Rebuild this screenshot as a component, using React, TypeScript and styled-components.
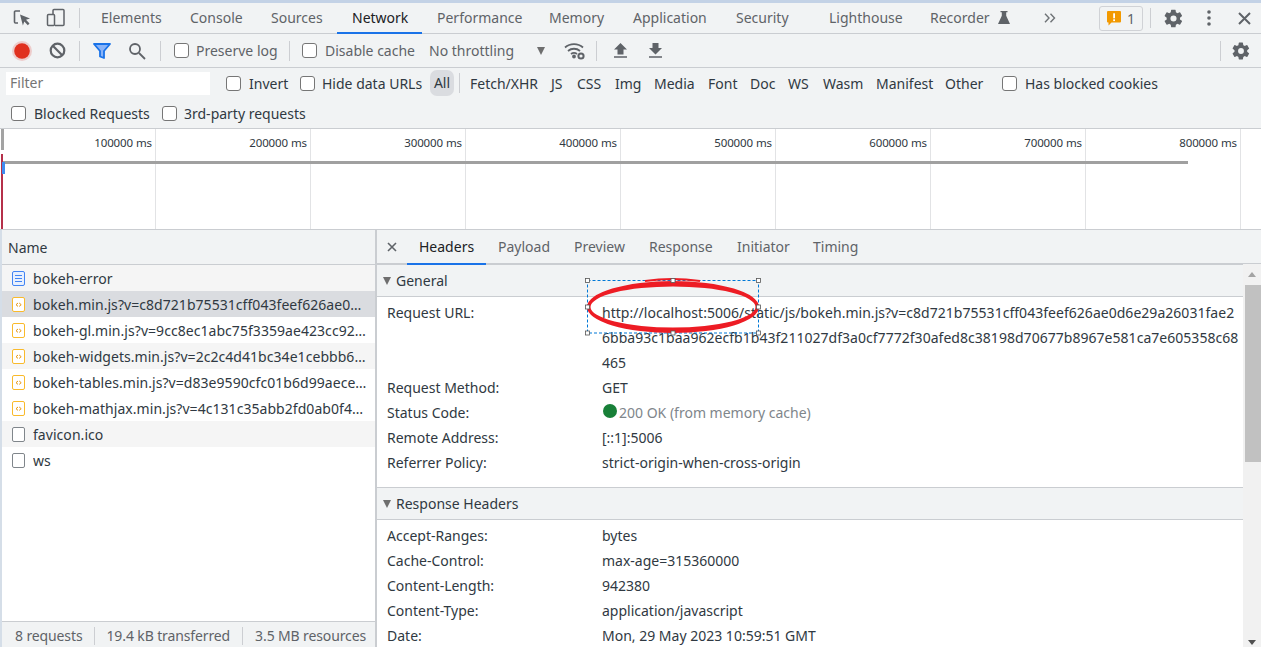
// App.tsx
import React from "react";
import styled, { createGlobalStyle } from "styled-components";

const GlobalStyle = createGlobalStyle`
  html, body { margin: 0; padding: 0; height: 100%; overflow: hidden; background: #fff; }
  body { font-family: "Noto Sans", "Open Sans", sans-serif; font-size: 14px; color: #303942; }
  #root { height: 647px; }
`;

const Page = styled.div`
  position: relative;
  width: 1261px;
  height: 647px;
  display: flex;
  flex-direction: column;
  overflow: hidden;
  border-top: 3px solid #c3d2e6;
  box-sizing: border-box;
`;

const TabBar = styled.div`
  flex: none;
  display: flex;
  align-items: stretch;
  background: #f1f3f4;
  border-bottom: 1px solid #cacdd1;
  height: 30px;
`;

const IconSlot = styled.div<{ $w: number; $pl?: number }>`
  width: ${(p) => p.$w}px;
  flex: none;
  display: flex;
  align-items: center;
  justify-content: center;
  box-sizing: border-box;
  padding-left: ${(p) => p.$pl ?? 0}px;
`;

const VLine = styled.div<{ $ml?: number; $mr?: number; $h?: number }>`
  flex: none;
  align-self: center;
  width: 1px;
  height: ${(p) => p.$h ?? 20}px;
  background: #ccced2;
  margin: 0 ${(p) => p.$mr ?? 0}px 0 ${(p) => p.$ml ?? 0}px;
`;

const MainTab = styled.div<{ $w: number; $on?: boolean }>`
  width: ${(p) => p.$w}px;
  flex: none;
  display: flex;
  align-items: center;
  justify-content: flex-start;
  padding-left: 15px;
  box-sizing: border-box;
  white-space: nowrap;
  color: ${(p) => (p.$on ? "#202124" : "#5f6368")};
  margin-bottom: -1px;
  border-bottom: 2px solid ${(p) => (p.$on ? "#1a73e8" : "transparent")};
  gap: 8px;
`;

const IssueBadge = styled.div`
  flex: none;
  align-self: center;
  width: 44px;
  height: 25px;
  box-sizing: border-box;
  margin-left: 38px;
  border: 1px solid #d0d2d6;
  border-radius: 3px;
  display: flex;
  align-items: center;
  justify-content: center;
  gap: 6px;
  color: #5f6368;
`;

const Toolbar = styled.div`
  height: 33px;
  flex: none;
  display: flex;
  align-items: center;
  background: #f1f3f4;
  border-bottom: 1px solid #cacdd1;
  color: #5f6368;
`;

const Check = styled.span`
  flex: none;
  width: 13px;
  height: 13px;
  border: 1px solid #767676;
  border-radius: 3px;
  background: #fff;
  display: inline-block;
`;

const CheckLabel = styled.label<{ $w?: number; $gap?: number }>`
  flex: none;
  display: inline-flex;
  align-items: center;
  gap: ${(p) => p.$gap ?? 8}px;
  white-space: nowrap;
  ${(p) => (p.$w ? `width: ${p.$w}px;` : "")}
`;

const FilterPanel = styled.div`
  height: 60px;
  flex: none;
  background: #f1f3f4;
  border-bottom: 1px solid #cacdd1;
  color: #303942;
`;

const FilterRow = styled.div<{ $pl?: number }>`
  height: 30px;
  display: flex;
  align-items: center;
  padding-left: ${(p) => p.$pl ?? 0}px;
`;

const FilterBox = styled.div`
  width: 204px;
  height: 23px;
  flex: none;
  margin: 0 16px 0 6px;
  padding-left: 4px;
  box-sizing: border-box;
  background: #fff;
  color: #757575;
  line-height: 22px;
`;

const TypeChip = styled.div<{ $w: number; $on?: boolean }>`
  flex: none;
  width: ${(p) => p.$w}px;
  white-space: nowrap;
  ${(p) =>
    p.$on
      ? `background:#dadce0;border-radius:7px;height:26px;line-height:26px;text-align:center;`
      : ""}
`;

const Timeline = styled.div`
  position: relative;
  height: 100px;
  flex: none;
  display: flex;
  background: #fff;
  padding-left: 1px;
`;

const TimeCell = styled.div`
  flex: none;
  width: 155px;
  box-sizing: border-box;
  height: 100px;
  border-right: 1px solid #e2e3e5;
  text-align: right;
  padding: 4px 3px 0 0;
  font-size: 11.5px;
  letter-spacing: -0.1px;
  line-height: 20px;
  color: #303942;
  white-space: nowrap;
`;

const OverviewBar = styled.div`
  position: absolute;
  left: 2px;
  top: 32px;
  width: 1186px;
  height: 3px;
  background: #a0a0a0;
`;

const LeftGrip = styled.div`
  position: absolute;
  left: 1px;
  top: 0;
  width: 3px;
  height: 21px;
  background: #a3a3a3;
`;

const RedLine = styled.div`
  position: absolute;
  left: 1px;
  top: 25px;
  width: 2px;
  height: 75px;
  background: #b5304a;
`;

const BlueTick = styled.div`
  position: absolute;
  left: 2px;
  top: 33px;
  width: 3px;
  height: 12px;
  background: #3f8cf0;
`;

const Split = styled.div`
  flex: 1;
  min-height: 0;
  display: flex;
  border-top: 1px solid #cacdd1;
`;

const ListPane = styled.div`
  flex: none;
  width: 377px;
  box-sizing: border-box;
  border-left: 2px solid #d5dee8;
  border-right: 2px solid #cacdd1;
  display: flex;
  flex-direction: column;
`;

const ListHead = styled.div`
  height: 34px;
  flex: none;
  box-sizing: content-box;
  background: #f1f3f4;
  border-bottom: 1px solid #cacdd1;
  padding-left: 6px;
  line-height: 36px;
  color: #303942;
`;

const Rows = styled.div`
  flex: 1;
  min-height: 0;
`;

const Row = styled.div<{ $bg: string }>`
  height: 26px;
  display: flex;
  align-items: center;
  gap: 8px;
  padding-left: 10px;
  padding-right: 7px;
  background: ${(p) => p.$bg};
  white-space: nowrap;
  color: #303942;
`;

const RowName = styled.span`
  overflow: hidden;
  text-overflow: ellipsis;
  min-width: 0;
  letter-spacing: 0.05px;
`;

const StatusBar = styled.div`
  height: 26px;
  flex: none;
  background: #f1f3f4;
  border-top: 1px solid #cacdd1;
  display: flex;
  align-items: center;
  color: #5f6368;
  white-space: nowrap;
  padding-left: 13px;
  padding-top: 2px;
  box-sizing: border-box;
`;

const StatusText = styled.span`
  letter-spacing: -0.12px;
`;

const DetailPane = styled.div`
  flex: 1;
  min-width: 0;
  display: flex;
  flex-direction: column;
`;

const DetailTabs = styled.div`
  height: 33px;
  flex: none;
  background: #f1f3f4;
  border-bottom: 2px solid #cacdd1;
  display: flex;
  align-items: stretch;
`;

const DetailTab = styled.div<{ $w: number; $on?: boolean }>`
  flex: none;
  width: ${(p) => p.$w}px;
  box-sizing: border-box;
  display: flex;
  align-items: center;
  padding-left: 12px;
  margin-bottom: -2px;
  border-bottom: 2px solid ${(p) => (p.$on ? "#1a73e8" : "transparent")};
  color: ${(p) => (p.$on ? "#202124" : "#5f6368")};
  white-space: nowrap;
`;

const DetailBody = styled.div`
  flex: 1;
  min-height: 0;
  display: flex;
`;

const Sections = styled.div`
  flex: 1;
  min-width: 0;
  overflow: hidden;
`;

const SectionHead = styled.div<{ $top?: boolean }>`
  height: 31px;
  background: #f1f3f4;
  border-bottom: 1px solid #cacdd1;
  ${(p) => (p.$top ? "border-top: 1px solid #cacdd1;" : "")}
  display: flex;
  align-items: center;
  gap: 5px;
  padding-left: 6px;
  color: #303942;
`;

const Caret = styled.span`
  width: 0;
  height: 0;
  flex: none;
  border-left: 4.5px solid transparent;
  border-right: 4.5px solid transparent;
  border-top: 8px solid #6e6e6e;
`;

const Pairs = styled.div`
  padding: 3px 3px 12px 10px;
`;

const Pair = styled.div`
  display: grid;
  grid-template-columns: 215px 1fr;
  line-height: 25px;
  color: #303942;
`;

const PairValue = styled.div`
  display: flex;
  align-items: center;
  gap: 2px;
`;

const UrlValue = styled.div`
  word-break: break-all;
  letter-spacing: 0.03px;
`;

const Dot = styled.span`
  width: 14px;
  height: 14px;
  border-radius: 50%;
  background: #188038;
  flex: none;
  margin-top: -3px;
  margin-left: 1px;
`;

const Muted = styled.span`
  color: #80868b;
`;

const Scrollbar = styled.div`
  flex: none;
  width: 18px;
  background: #f1f1f1;
  display: flex;
  flex-direction: column;
  align-items: center;
  margin-top: -1px;
`;

const ScrollBtn = styled.div<{ $up?: boolean }>`
  flex: none;
  height: ${(p) => (p.$up ? 21 : 10)}px;
  width: 100%;
  display: flex;
  align-items: center;
  justify-content: center;
  &::before {
    content: "";
    border-left: 4.5px solid transparent;
    border-right: 4.5px solid transparent;
    ${(p) =>
      p.$up ? "border-bottom: 5px solid #a3a3a3;" : "border-top: 5px solid #505050;"}
  }
`;

const Thumb = styled.div`
  flex: none;
  width: 16px;
  height: 177px;
  margin-left: 2px;
  background: #c1c1c1;
`;

const Spacer = styled.div`
  flex: 1;
`;

const Annotation = styled.svg`
  position: absolute;
  left: 580px;
  top: 269px;
  pointer-events: none;
`;

const tabs: [string, number, boolean?][] = [
  ["Elements", 89],
  ["Console", 81],
  ["Sources", 81],
  ["Network", 85, true],
  ["Performance", 112],
  ["Memory", 84],
  ["Application", 103],
  ["Security", 93],
  ["Lighthouse", 101],
];

const types: [string, number][] = [
  ["Fetch/XHR", 81],
  ["JS", 26],
  ["CSS", 38],
  ["Img", 39],
  ["Media", 54],
  ["Font", 42],
  ["Doc", 38],
  ["WS", 35],
  ["Wasm", 53],
  ["Manifest", 69],
  ["Other", 57],
];

const requests: [string, string, string][] = [
  ["doc", "bokeh-error", "#f5f5f5"],
  ["js", "bokeh.min.js?v=c8d721b75531cff043feef626ae0d6e29a26031fae2", "#dadce0"],
  ["js", "bokeh-gl.min.js?v=9cc8ec1abc75f3359ae423cc92f4a1c0", "#fff"],
  ["js", "bokeh-widgets.min.js?v=2c2c4d41bc34e1cebbb6a91c", "#f5f5f5"],
  ["js", "bokeh-tables.min.js?v=d83e9590cfc01b6d99aece44f1", "#fff"],
  ["js", "bokeh-mathjax.min.js?v=4c131c35abb2fd0ab0f4d2a1", "#fff"],
  ["file", "favicon.ico", "#f5f5f5"],
  ["file", "ws", "#fff"],
];

const responseHeaders: [string, string][] = [
  ["Accept-Ranges:", "bytes"],
  ["Cache-Control:", "max-age=315360000"],
  ["Content-Length:", "942380"],
  ["Content-Type:", "application/javascript"],
  ["Date:", "Mon, 29 May 2023 10:59:51 GMT"],
];

const handles = [
  [7.5, 8.5],
  [93, 8.5],
  [178.5, 8.5],
  [7.5, 35],
  [178.5, 35],
  [7.5, 61],
  [93, 61],
  [178.5, 61],
];

const Gear = ({ size = 18 }: { size?: number }) => (
  <svg width={size} height={size} viewBox="0 0 24 24" fill="#5f6368">
    <path d="M19.4 13c.04-.33.06-.66.06-1s-.02-.67-.06-1l2.15-1.68a.5.5 0 0 0 .12-.64l-2.04-3.53a.5.5 0 0 0-.62-.22l-2.54 1.02a7.5 7.5 0 0 0-1.73-1L14.36 2.3a.5.5 0 0 0-.5-.43H9.78a.5.5 0 0 0-.5.43L8.9 4.95a7.7 7.7 0 0 0-1.73 1L4.63 4.93a.5.5 0 0 0-.62.22L1.97 8.68a.5.5 0 0 0 .12.64L4.24 11c-.04.33-.07.67-.07 1s.03.67.07 1l-2.15 1.68a.5.5 0 0 0-.12.64l2.04 3.53c.13.22.39.3.62.22l2.54-1.02c.54.41 1.11.76 1.73 1l.38 2.65c.05.25.26.43.5.43h4.08c.24 0 .45-.18.5-.43l.38-2.65a7.7 7.7 0 0 0 1.73-1l2.54 1.02c.23.08.49 0 .62-.22l2.04-3.53a.5.5 0 0 0-.12-.64L19.4 13ZM12 15.5a3.5 3.5 0 1 1 0-7 3.5 3.5 0 0 1 0 7Z" />
  </svg>
);

const FileIcon = ({ kind }: { kind: string }) => {
  if (kind === "doc") {
    return (
      <svg width="13" height="15" viewBox="0 0 13 15" style={{ flex: "none" }}>
        <rect x="0.5" y="0.5" width="12" height="14" rx="1.5" fill="#e8f0fe" stroke="#4285f4" />
        <path d="M3 4.5h7M3 7.5h7M3 10.5h7" stroke="#4285f4" strokeWidth="1.2" />
      </svg>
    );
  }
  if (kind === "js") {
    return (
      <svg width="13" height="15" viewBox="0 0 13 15" style={{ flex: "none" }}>
        <rect x="0.5" y="0.5" width="12" height="14" rx="1.5" fill="#fff" stroke="#f9ba2c" />
        <path d="M6 6 4 7.7 6 9.4M7.2 6l2 1.7-2 1.7" fill="none" stroke="#e8960c" strokeWidth="1" />
      </svg>
    );
  }
  return (
    <svg width="13" height="15" viewBox="0 0 13 15" style={{ flex: "none" }}>
      <rect x="0.5" y="0.5" width="12" height="14" rx="1.5" fill="#fff" stroke="#80868b" />
    </svg>
  );
};

export default function App() {
  return (
    <>
      <GlobalStyle />
      <Page>
        <TabBar>
          <IconSlot $w={45}>
            <svg width="20" height="18" viewBox="0 0 20 18" fill="none">
              <path d="M7 2H2.500A1 1 0 0 0 1.500 3v10a1 1 0 0 0 1 1H5" stroke="#5f6368" strokeWidth="1.6" />
              <path d="M7 5.500 17 9.500l-4 1.300 3.500 3.700-1.700 1.700-3.500-3.700-1.400 4Z" fill="#5f6368" />
            </svg>
          </IconSlot>
          <IconSlot $w={22}>
            <svg width="20" height="20" viewBox="0 0 20 20" fill="none" stroke="#5f6368" strokeWidth="1.5">
              <path d="M7 6V2.500a1 1 0 0 1 1-1h9a1 1 0 0 1 1 1v14a1 1 0 0 1-1 1h-8" />
              <rect x="1.500" y="6.500" width="7" height="11" rx="1" />
            </svg>
          </IconSlot>
          <VLine $ml={12} $mr={6} />
          {tabs.map(([name, w, on]) => (
            <MainTab key={name} $w={w} $on={on}>
              {name}
            </MainTab>
          ))}
          <MainTab $w={124}>
            Recorder
            <svg width="12" height="13" viewBox="0 0 12 13" fill="#5f6368">
              <path d="M2.500 0h7v1.200H8.200v3.600L12 13H0l3.800-8.200V1.200H2.500Z" />
            </svg>
          </MainTab>
          <IconSlot $w={22}>
            <svg width="12" height="10" viewBox="0 0 12 10" fill="none" stroke="#6e7276" strokeWidth="1.4">
              <path d="M1 .8 5 5 1 9.200M6.500.8l4 4.200-4 4.200" />
            </svg>
          </IconSlot>
          <IssueBadge>
            <svg width="14" height="15" viewBox="0 0 14 15">
              <path d="M0 1a1 1 0 0 1 1-1h12a1 1 0 0 1 1 1v9.500a1 1 0 0 1-1 1H4.500L1.500 14.500V11.500H1a1 1 0 0 1-1-1Z" fill="#f29900" />
              <rect x="6.200" y="2.300" width="1.800" height="5" fill="#fff" />
              <rect x="6.200" y="8.300" width="1.800" height="1.800" fill="#fff" />
            </svg>
            1
          </IssueBadge>
          <VLine $ml={7} $mr={7} />
          <IconSlot $w={30}>
            <Gear size={21} />
          </IconSlot>
          <IconSlot $w={42}>
            <svg width="4" height="16" viewBox="0 0 4 16" fill="#5f6368">
              <circle cx="2" cy="2" r="1.800" />
              <circle cx="2" cy="8" r="1.800" />
              <circle cx="2" cy="14" r="1.800" />
            </svg>
          </IconSlot>
          <IconSlot $w={28}>
            <svg width="13" height="13" viewBox="0 0 13 13" stroke="#5f6368" strokeWidth="2">
              <path d="M1 1l11 11M12 1 1 12" />
            </svg>
          </IconSlot>
        </TabBar>

        <Toolbar>
          <IconSlot $w={43}>
            <svg width="22" height="22" viewBox="0 0 22 22">
              <circle cx="11" cy="11" r="10" fill="#e33226" opacity="0.2" />
              <circle cx="11" cy="11" r="7.800" fill="#e0301e" />
            </svg>
          </IconSlot>
          <IconSlot $w={29}>
            <svg width="17" height="17" viewBox="0 0 17 17" fill="none" stroke="#5f6368" strokeWidth="2.200">
              <circle cx="8.500" cy="8.500" r="6.800" />
              <path d="M3.800 3.800 13.200 13.200" />
            </svg>
          </IconSlot>
          <VLine $ml={7} $mr={4} />
          <IconSlot $w={36}>
            <svg width="18" height="16" viewBox="0 0 18 16" fill="#8ab4f8" stroke="#1a73e8" strokeWidth="1.800">
              <path d="M1 1h16l-6 7v7l-4-1.500V8Z" strokeLinejoin="round" />
            </svg>
          </IconSlot>
          <IconSlot $w={34}>
            <svg width="18" height="18" viewBox="0 0 18 18" fill="none" stroke="#5f6368" strokeWidth="1.800">
              <circle cx="7" cy="7" r="5" />
              <path d="M11 11l6 6" />
            </svg>
          </IconSlot>
          <VLine $ml={6} $mr={13} />
          <CheckLabel $w={115} $gap={7}>
            <Check />
            Preserve log
          </CheckLabel>
          <VLine $mr={12} />
          <CheckLabel $w={127} $gap={8}>
            <Check />
            Disable cache
          </CheckLabel>
          <TypeChip $w={108}>No throttling</TypeChip>
          <Caret />
          <IconSlot $w={51} $pl={9}>
            <svg width="22" height="18" viewBox="0 0 22 18" fill="none" stroke="#5f6368" strokeWidth="1.800">
              <path d="M1 5.500C6 1 14 1 19 5.500M4 9c3.500-3 8.500-3 12 0M7 12c1.700-1.300 4.300-1.300 6 0" />
              <circle cx="10" cy="14.500" r="1" fill="#5f6368" />
              <circle cx="17" cy="14" r="2.600" strokeWidth="2" />
            </svg>
          </IconSlot>
          <VLine $h={20} />
          <IconSlot $w={46}>
            <svg width="13" height="15" viewBox="0 0 13 15" fill="#5f6368">
              <path d="M6.500 0 13 6.500H9.500v5h-6v-5H0ZM0 13.300h13v1.400H0Z" />
            </svg>
          </IconSlot>
          <IconSlot $w={24}>
            <svg width="13" height="15" viewBox="0 0 13 15" fill="#5f6368">
              <path d="M3.500 0h6v5H13l-6.500 6.500L0 5h3.500ZM0 13.300h13v1.400H0Z" />
            </svg>
          </IconSlot>
          <Spacer />
          <VLine $h={20} />
          <IconSlot $w={40}>
            <Gear size={20} />
          </IconSlot>
        </Toolbar>

        <FilterPanel>
          <FilterRow>
            <FilterBox>Filter</FilterBox>
            <CheckLabel $w={74}>
              <Check />
              Invert
            </CheckLabel>
            <CheckLabel $w={130} $gap={7}>
              <Check />
              Hide data URLs
            </CheckLabel>
            <TypeChip $w={24} $on>
              All
            </TypeChip>
            <VLine $ml={5} $mr={10} $h={20} />
            {types.map(([name, w]) => (
              <TypeChip key={name} $w={w}>
                {name}
              </TypeChip>
            ))}
            <CheckLabel>
              <Check />
              Has blocked cookies
            </CheckLabel>
          </FilterRow>
          <FilterRow $pl={11}>
            <CheckLabel $w={151}>
              <Check />
              Blocked Requests
            </CheckLabel>
            <CheckLabel $gap={7}>
              <Check />
              3rd-party requests
            </CheckLabel>
          </FilterRow>
        </FilterPanel>

        <Timeline>
          {[100000, 200000, 300000, 400000, 500000, 600000, 700000, 800000].map((t) => (
            <TimeCell key={t}>{t} ms</TimeCell>
          ))}
          <LeftGrip />
          <OverviewBar />
          <RedLine />
          <BlueTick />
        </Timeline>

        <Split>
          <ListPane>
            <ListHead>Name</ListHead>
            <Rows>
              {requests.map(([kind, name, bg]) => (
                <Row key={name} $bg={bg}>
                  <FileIcon kind={kind} />
                  <RowName>{name}</RowName>
                </Row>
              ))}
            </Rows>
            <StatusBar>
              <StatusText>8 requests</StatusText>
              <VLine $ml={12} $mr={11} $h={18} />
              <StatusText>19.4 kB transferred</StatusText>
              <VLine $ml={12} $mr={12} $h={18} />
              <StatusText>3.5 MB resources</StatusText>
            </StatusBar>
          </ListPane>

          <DetailPane>
            <DetailTabs>
              <IconSlot $w={30}>
                <svg width="10" height="10" viewBox="0 0 10 10" stroke="#5f6368" strokeWidth="1.600">
                  <path d="M1 1l8 8M9 1 1 9" />
                </svg>
              </IconSlot>
              <DetailTab $w={79} $on>
                Headers
              </DetailTab>
              <DetailTab $w={76}>Payload</DetailTab>
              <DetailTab $w={75}>Preview</DetailTab>
              <DetailTab $w={88}>Response</DetailTab>
              <DetailTab $w={76}>Initiator</DetailTab>
              <DetailTab $w={70}>Timing</DetailTab>
            </DetailTabs>
            <DetailBody>
              <Sections>
                <SectionHead>
                  <Caret />
                  General
                </SectionHead>
                <Pairs>
                  <Pair>
                    <span>Request URL:</span>
                    <UrlValue>
                      http://localhost:5006/static/js/bokeh.min.js?v=c8d721b75531cff043feef626ae0d6e29a26031fae26bba93c1baa962ecfb1b43f211027df3a0cf7772f30afed8c38198d70677b8967e581ca7e605358c68465
                    </UrlValue>
                  </Pair>
                  <Pair>
                    <span>Request Method:</span>
                    <PairValue>GET</PairValue>
                  </Pair>
                  <Pair>
                    <span>Status Code:</span>
                    <PairValue>
                      <Dot />
                      <Muted>200 OK (from memory cache)</Muted>
                    </PairValue>
                  </Pair>
                  <Pair>
                    <span>Remote Address:</span>
                    <PairValue>[::1]:5006</PairValue>
                  </Pair>
                  <Pair>
                    <span>Referrer Policy:</span>
                    <PairValue>strict-origin-when-cross-origin</PairValue>
                  </Pair>
                </Pairs>
                <SectionHead $top>
                  <Caret />
                  Response Headers
                </SectionHead>
                <Pairs>
                  {responseHeaders.map(([k, v]) => (
                    <Pair key={k}>
                      <span>{k}</span>
                      <PairValue>{v}</PairValue>
                    </Pair>
                  ))}
                </Pairs>
              </Sections>
              <Scrollbar>
                <ScrollBtn $up />
                <Thumb />
                <Spacer />
                <ScrollBtn />
              </Scrollbar>
            </DetailBody>
          </DetailPane>
        </Split>

        <Annotation width="190" height="70" viewBox="0 0 190 70">
          <rect x="7.5" y="8.5" width="171" height="52.5" fill="none" stroke="#0078d7" strokeWidth="1" strokeDasharray="3 2" />
          <path d="M65 9Q92 5 120 9" fill="none" stroke="#ed1c24" strokeWidth="2" />
          <path
            fillRule="evenodd"
            fill="#ed1c24"
            d="M7 35a86 26 0 1 0 172 0a86 26 0 1 0-172 0ZM10.500 35a82.500 20.500 0 1 0 165 0a82.500 20.500 0 1 0-165 0Z"
          />
          {handles.map(([x, y]) => (
            <rect key={`${x}-${y}`} x={x - 2} y={y - 2} width="4" height="4" fill="#fff" stroke="#555" strokeWidth="0.8" />
          ))}
        </Annotation>
      </Page>
    </>
  );
}
